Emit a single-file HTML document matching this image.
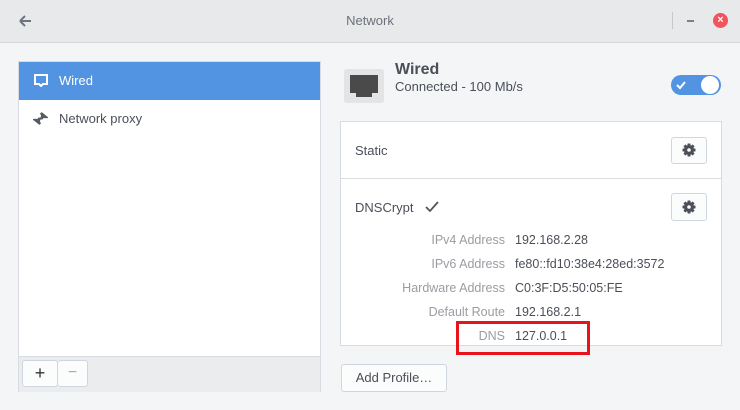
<!DOCTYPE html>
<html><head><style>
body{margin:0;width:740px;height:410px;background:#f4f5f7;font-family:"Liberation Sans",sans-serif;font-size:13px;color:#4b4f58;position:relative;overflow:hidden}
.a{position:absolute}
.btn{position:absolute;background:#fbfcfc;border:1px solid #cfd6e0;border-radius:3px;box-sizing:border-box}
.lbl{position:absolute;width:200px;text-align:right;left:305px;color:#9a9ca2;font-size:12.5px}
.val{position:absolute;left:515px;color:#4b4f58;font-size:12.5px}
</style></head><body>
<div class="a" style="left:0;top:0;width:740px;height:42px;background:#e8e9eb;border-bottom:1px solid #d5d7db"></div>
<svg class="a" style="left:17px;top:13px" width="16" height="16"><path d="M3 8H14M3 8L8 3M3 8L8 13" stroke="#6f7480" stroke-width="2" fill="none"/></svg>
<div class="a" style="left:0;width:740px;top:13px;text-align:center;color:#6c707a">Network</div>
<div class="a" style="left:672px;top:12px;width:1px;height:17px;background:#c5c8cc"></div>
<div class="a" style="left:687px;top:20px;width:7px;height:2px;background:#7c8088"></div>
<div class="a" style="left:713px;top:13px;width:15px;height:15px;border-radius:50%;background:#f0545c;color:#fff;font-size:11px;line-height:15px;text-align:center;font-weight:bold">×</div>

<div class="a" style="left:18px;top:61px;width:303px;height:331px;background:#fff;border:1px solid #d8dce2;box-sizing:border-box"></div>
<div class="a" style="left:19px;top:62px;width:301px;height:38px;background:#5294e2"></div>
<svg class="a" style="left:34px;top:74px" width="14" height="13"><path d="M1 1H13V10H9L7 12L5 10H1Z" stroke="#fff" stroke-width="2" fill="none"/></svg>
<div class="a" style="left:59px;top:73px;color:#fff">Wired</div>
<svg class="a" style="left:33px;top:111px" width="15" height="15"><path d="M8 2L13 6L9 6V4Z M7 13L2 9L6 9V11Z M5 8L10 7" stroke="#555a63" stroke-width="2.2" fill="#555a63"/></svg>
<div class="a" style="left:59px;top:111px">Network proxy</div>
<div class="a" style="left:19px;top:356px;width:301px;height:35px;background:#ebecee;border-top:1px solid #d8dce2"></div>
<div class="btn" style="left:22px;top:360px;width:36px;height:27px;text-align:center;line-height:24px;font-size:18px;color:#333">+</div>
<div class="btn" style="left:58px;top:360px;width:30px;height:27px;text-align:center;line-height:24px;font-size:16px;color:#aaa;border-left:none">−</div>

<div class="a" style="left:344px;top:69px;width:40px;height:34px;background:#e3e4e6;border-radius:3px"></div>
<div class="a" style="left:350px;top:75px;width:28px;height:18px;background:#4a4a4a"></div>
<div class="a" style="left:356px;top:93px;width:16px;height:4px;background:#4a4a4a"></div>
<div class="a" style="left:395px;top:61px;font-weight:bold;font-size:16px">Wired</div>
<div class="a" style="left:395px;top:79px">Connected - 100 Mb/s</div>
<div class="a" style="left:671px;top:75px;width:50px;height:20px;border-radius:10px;background:#5294e2"></div>
<div class="a" style="left:701px;top:76px;width:18px;height:18px;border-radius:50%;background:#fff"></div>
<svg class="a" style="left:676px;top:80px" width="10" height="10"><path d="M1 5L4 8L9 2" stroke="#fff" stroke-width="2" fill="none"/></svg>

<div class="a" style="left:340px;top:121px;width:382px;height:225px;background:#fff;border:1px solid #d8dce2;box-sizing:border-box"></div>
<div class="a" style="left:341px;top:178px;width:380px;height:1px;background:#dadde2"></div>
<div class="a" style="left:355px;top:143px">Static</div>
<div class="a" style="left:355px;top:200px">DNSCrypt</div>
<svg class="a" style="left:425px;top:201px" width="14" height="12"><path d="M1 6L5 10L13 1" stroke="#555" stroke-width="1.8" fill="none"/></svg>
<div class="btn" style="left:671px;top:137px;width:36px;height:27px"></div>
<div class="btn" style="left:671px;top:193px;width:36px;height:28px"></div>
<svg class="a" style="left:682px;top:143px" width="14" height="14" viewBox="0 0 14 14"><g fill="#4b4f58"><rect x="5.5" y="0.5" width="3" height="13" rx="0.5"/><rect x="5.5" y="0.5" width="3" height="13" rx="0.5" transform="rotate(45 7 7)"/><rect x="5.5" y="0.5" width="3" height="13" rx="0.5" transform="rotate(90 7 7)"/><rect x="5.5" y="0.5" width="3" height="13" rx="0.5" transform="rotate(135 7 7)"/><circle cx="7" cy="7" r="5"/></g><circle cx="7" cy="7" r="1.8" fill="#fbfcfc"/></svg>
<svg class="a" style="left:682px;top:200px" width="14" height="14" viewBox="0 0 14 14"><g fill="#4b4f58"><rect x="5.5" y="0.5" width="3" height="13" rx="0.5"/><rect x="5.5" y="0.5" width="3" height="13" rx="0.5" transform="rotate(45 7 7)"/><rect x="5.5" y="0.5" width="3" height="13" rx="0.5" transform="rotate(90 7 7)"/><rect x="5.5" y="0.5" width="3" height="13" rx="0.5" transform="rotate(135 7 7)"/><circle cx="7" cy="7" r="5"/></g><circle cx="7" cy="7" r="1.8" fill="#fbfcfc"/></svg>
<div class="lbl" style="top:233px">IPv4 Address</div><div class="val" style="top:233px">192.168.2.28</div>
<div class="lbl" style="top:257px">IPv6 Address</div><div class="val" style="top:257px">fe80::fd10:38e4:28ed:3572</div>
<div class="lbl" style="top:281px">Hardware Address</div><div class="val" style="top:281px">C0:3F:D5:50:05:FE</div>
<div class="lbl" style="top:305px">Default Route</div><div class="val" style="top:305px">192.168.2.1</div>
<div class="lbl" style="top:329px">DNS</div><div class="val" style="top:329px">127.0.0.1</div>
<div class="a" style="left:456px;top:321px;width:134px;height:34px;border:3px solid #e8141b;box-sizing:border-box"></div>
<div class="btn" style="left:341px;top:364px;width:106px;height:28px;text-align:center;line-height:26px">Add Profile…</div>
</body></html>
